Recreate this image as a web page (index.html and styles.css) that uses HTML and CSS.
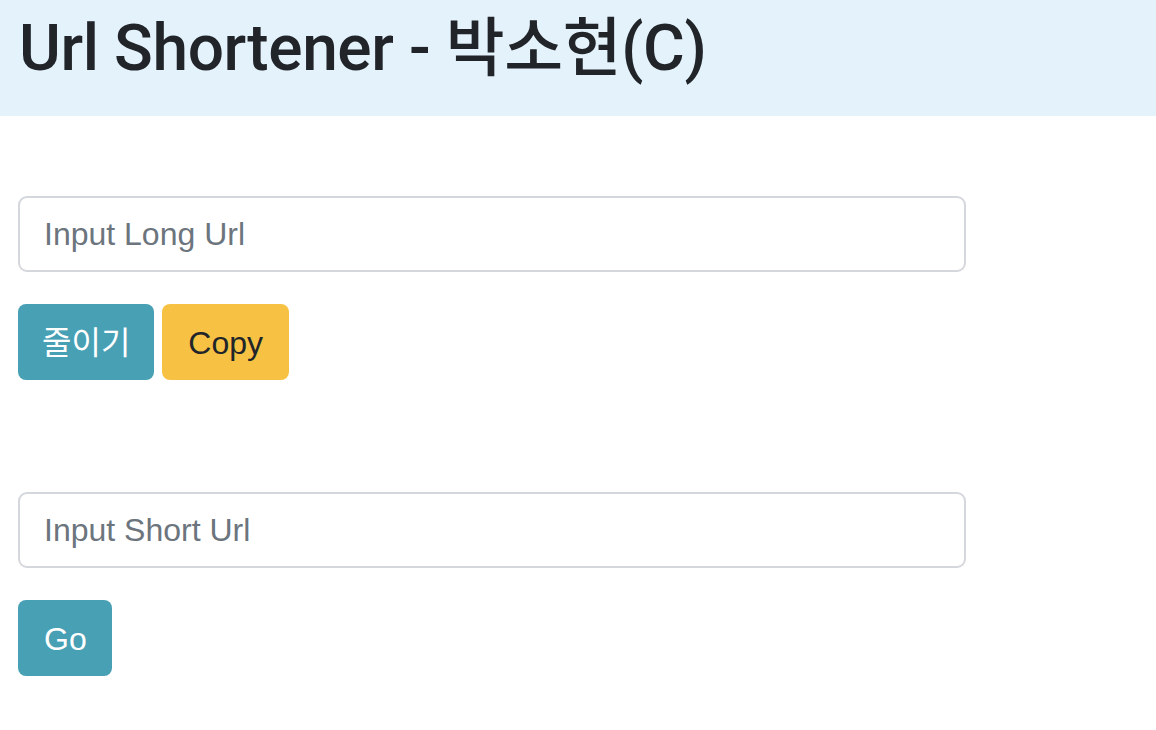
FILE: index.html
```html
<!DOCTYPE html>
<html lang="ko">
<head>
<meta charset="utf-8">
<title>Url Shortener</title>
<link rel="stylesheet" href="styles.css">
</head>
<body>
<header class="navbar">
  <h1 class="title">Url Shortener - 박소현(C)</h1>
</header>
<main class="content">
  <section class="group group-first">
    <input class="field" type="text" placeholder="Input Long Url">
    <div class="actions">
      <button class="btn btn-info">줄이기</button>
      <button class="btn btn-warning">Copy</button>
    </div>
  </section>
  <section class="group group-second">
    <input class="field" type="text" placeholder="Input Short Url">
    <div class="actions">
      <button class="btn btn-info btn-go">Go</button>
    </div>
  </section>
</main>
</body>
</html>
```
FILE: styles.css
```css
* { box-sizing: border-box; }
html, body {
  margin: 0;
  padding: 0;
  background: #ffffff;
  font-family: "Liberation Sans", "Noto Sans CJK KR", sans-serif;
  color: #212529;
}
.navbar {
  background: #e4f2fc;
  height: 116px;
  padding: 11px 20px 0 19px;
}
.title {
  margin: 0;
  font-family: "Roboto", "Noto Sans CJK KR", sans-serif;
  font-size: 64px;
  font-weight: 500;
  line-height: 76px;
  color: #212529;
  letter-spacing: -0.4px;
}
.content {
  padding: 0 18px;
}
.group { width: 948px; }
.group-first { margin-top: 80px; }
.group-second { margin-top: 112px; }
.field {
  display: block;
  width: 100%;
  height: 76px;
  padding: 12px 24px;
  border: 2px solid #d4d7db;
  border-radius: 9px;
  font-family: "Liberation Sans", "Noto Sans CJK KR", sans-serif;
  font-size: 32px;
  color: #495057;
  background: #fff;
  outline: none;
}
.field::placeholder { color: #6c757d; }
.actions {
  display: flex;
  gap: 8px;
  margin-top: 32px;
}
.btn {
  height: 76px;
  padding: 12px 24px;
  border: 0;
  border-radius: 8px;
  font-family: "Liberation Sans", "Noto Sans CJK KR", sans-serif;
  font-size: 32px;
  line-height: 54px;
}
.btn-info { background: #48a0b5; color: #ffffff; }
.btn-go { padding: 12px 25px 12px 26px; }
.btn-warning { background: #f7c244; color: #212529; padding: 12px 26px; }
```
